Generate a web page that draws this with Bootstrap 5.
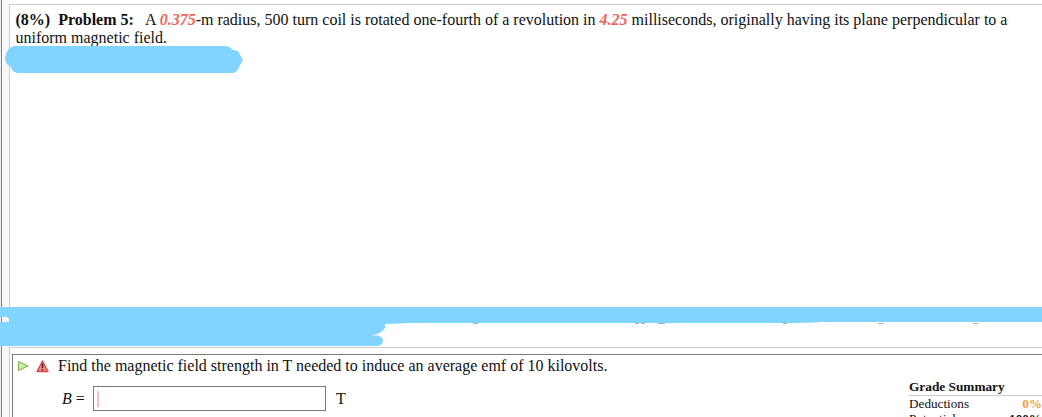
<!DOCTYPE html>
<html lang="en">
<head>
<meta charset="utf-8">
<meta name="viewport" content="width=device-width, initial-scale=1">
<title>Problem 5</title>
<link href="https://cdn.jsdelivr.net/npm/bootstrap@5.3.0/dist/css/bootstrap.min.css" rel="stylesheet">
<style>
body{font-family:"Liberation Serif",serif;font-size:16px;line-height:18px;color:#111;height:417px;background:#fff}
.gutter{width:9px;background:linear-gradient(90deg,#eee 0 1px,#808086 1px 2px,#f8f8fa 2px)}
.frame{border-color:#ccc!important}
.statement{height:339px;padding:6px 0 0 5.5px}
.value{color:#f0655a;font-style:italic;font-weight:bold}
.part{border:1px solid #7b7b7b;border-width:1px 0 0 1px;margin:6px 0 0 2px;height:63px}
.prompt{padding:2px 0 0 4px}
.triangle{margin-left:7px}
.question{margin-left:9px}
.entry{padding:11px 0 0 49px}
.symbol{width:31px}
.unit{margin-left:10px}
.answer{width:233px;height:25px;border:1px solid #777;padding:0 0 0 3px}
.caret{width:2px;height:16px;background:#fac0c0}
.grades{width:133px;font-size:13.2px;margin-top:25px}
.grades .heading{border-bottom:1px solid #ccc;font-size:13.3px;line-height:14px;padding-bottom:1px}
.grades .item{line-height:14px;padding-top:1px}
.deducted{color:#f0a040}
.marker{left:0;top:0;pointer-events:none}
.line{white-space:nowrap}
</style>
</head>
<body class="overflow-hidden position-relative d-flex">
<div class="gutter flex-shrink-0"></div>
<main class="flex-grow-1 overflow-hidden pt-1">
  <section class="statement border-top border-start frame">
    <div class="line"><b>(8%)&nbsp; Problem 5:</b>&nbsp;&nbsp; A <span class="value">0.375</span>-m radius, 500 turn coil is rotated one-fourth of a revolution in <span class="value">4.25</span> milliseconds, originally having its plane perpendicular to a</div>
    <div class="line">uniform magnetic field.</div>
  </section>
  <section class="border-top border-start frame mt-1">
    <div class="part d-flex justify-content-between">
      <div>
        <div class="prompt d-flex align-items-center line">
          <svg width="12" height="14" viewBox="0 0 12 14"><path d="M1.5 2.5 11 7 1.5 11.5Z" fill="#d3e8ac" stroke="#8db560" stroke-width="1.2" stroke-linejoin="round"/></svg>
          <svg class="triangle" width="13" height="14" viewBox="0 0 13 14"><path d="M6.5 2 12 12.5H1Z" fill="#f08a88" stroke="#d0494b" stroke-width="1.3" stroke-linejoin="round"/><path d="M6.5 4.5v4.5M6.5 10v1.6" stroke="#541818" stroke-width="1.5"/></svg>
          <span class="question">Find the magnetic field strength in T needed to induce an average emf of 10 kilovolts.</span>
        </div>
        <div class="entry d-flex align-items-center">
          <span class="symbol line"><i>B</i> =</span>
          <div class="answer d-flex align-items-center" role="textbox"><span class="caret"></span></div>
          <span class="unit">T</span>
        </div>
      </div>
      <div class="grades flex-shrink-0">
        <div class="heading fw-bold">Grade Summary</div>
        <div class="item d-flex justify-content-between"><span>Deductions</span><b class="deducted">0%</b></div>
        <div class="item d-flex justify-content-between"><span>Potential</span><b>100%</b></div>
      </div>
    </div>
  </section>
</main>
<svg class="marker position-absolute" width="1042" height="417" viewBox="0 0 1042 417" fill="#80d4ff">
  <path d="M14 46H226Q231 47 233 50Q239 50 240 55L243 60 240 65Q238 72 233 73H17Q12 72 11 67Q6 65 5 59Q6 48 14 46Z"/>
  <path d="M0 307H1042V322H822Q810 323 780 323H410L385 324V328Q381 334 371 335.5H378Q383 337 383 341T378 346H0V322H9V319L7 317H0Z"/>
  <path d="M473 323.5h5M635 323.5h4M641 323.5h4M658 323.5h7M783 323.5h4M878 323.5h6M973 323.5h5" stroke="#9fb2c4"/>
</svg>
<script src="https://cdn.jsdelivr.net/npm/bootstrap@5.3.0/dist/js/bootstrap.bundle.min.js"></script>
</body>
</html>
